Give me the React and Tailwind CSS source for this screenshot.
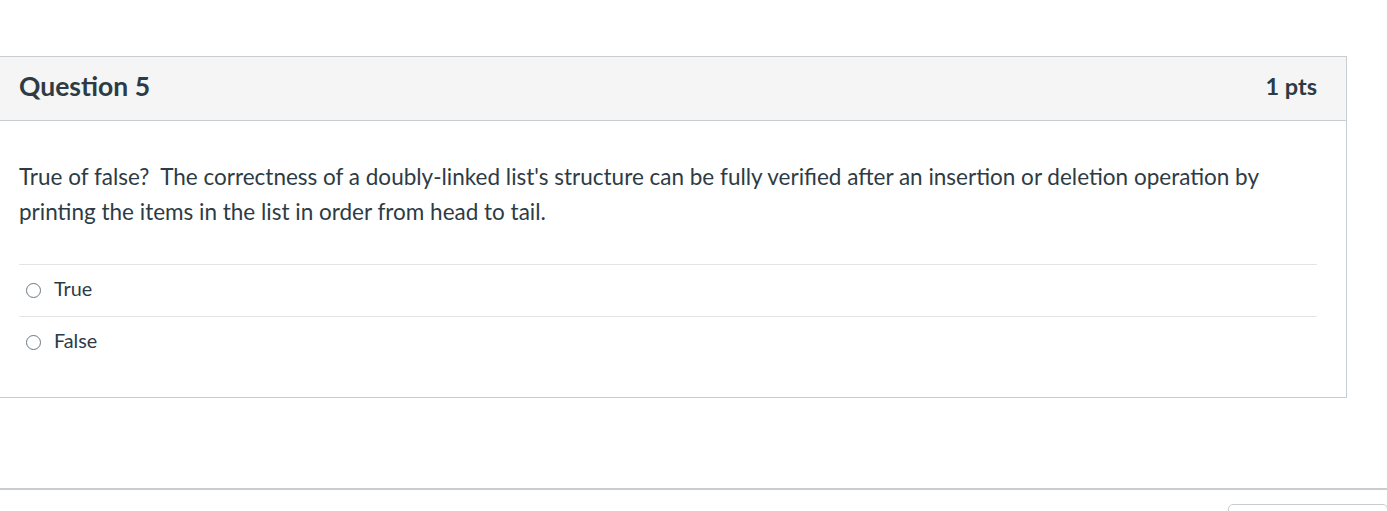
export default function App() {
  const font = { fontFamily: "Lato, 'Noto Sans', sans-serif" };
  return (
    <div className="w-[1387px] h-[511px] bg-white overflow-hidden text-[#2d3b45]" style={font}>
      <div className="pt-[56px]">
        <div className="-ml-px w-[1348px] border border-[#c7cdd1]">
          <div className="h-[64px] bg-[#f5f5f5] border-b border-[#c7cdd1] flex items-center justify-between pl-[19px] pr-[29px] pb-[3px]">
            <div className="text-[26.5px] font-bold">Question 5</div>
            <div className="text-[23.5px] font-bold text-[#2d3b45]">1 pts</div>
          </div>
          <div className="pl-[19px] pr-[29px] pt-[38px] pb-[29px]">
            <div className="text-[22.5px] leading-[35px]">
              True of false?&nbsp; The correctness of a doubly-linked list's structure can be fully verified after an insertion or deletion operation by printing the items in the list in order from head to tail.
            </div>
            <div className="mt-[35px]">
              {["True", "False"].map((t) => (
                <div key={t} className="border-t border-[#e3e6e8] h-[52px] flex items-center pl-[7px]">
                  <span className="w-[15px] h-[15px] rounded-full border-[1.5px] border-[#6b7780] bg-white"></span>
                  <span className="ml-[13px] text-[19.8px] -mt-[3px]">{t}</span>
                </div>
              ))}
            </div>
          </div>
        </div>
      </div>
      <div className="mt-[90px] border-t-2 border-[#c7cdd1]"></div>
      <div className="flex justify-end mt-[14px]">
        <div className="w-[160px] h-[40px] mr-[-1px] border border-[#c7cdd1] rounded-[5px]"></div>
      </div>
    </div>
  );
}
